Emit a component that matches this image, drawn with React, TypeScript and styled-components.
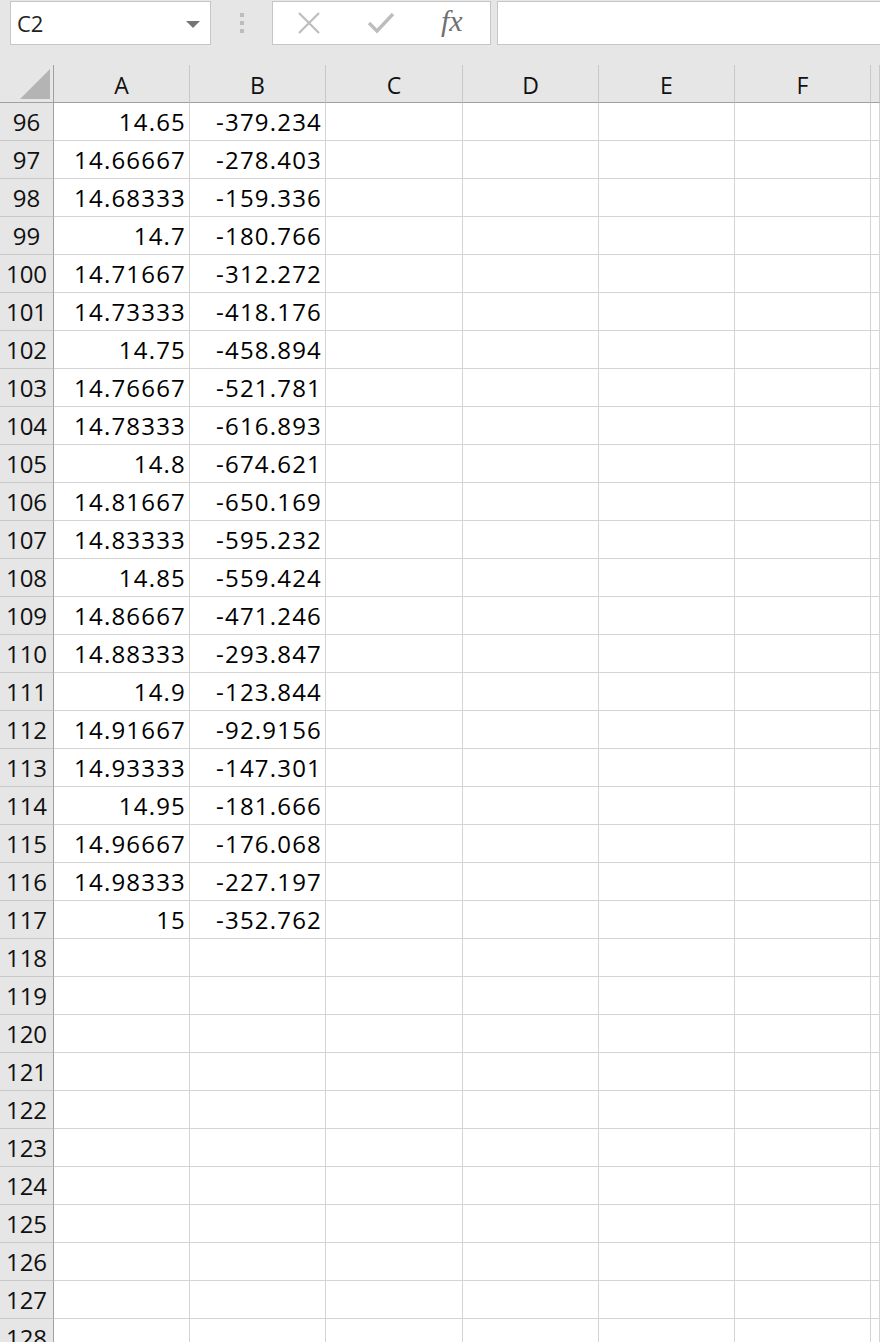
import React from 'react';
import styled, { createGlobalStyle } from 'styled-components';

const GlobalStyle = createGlobalStyle`
    html, body {
        margin: 0;
        padding: 0;
        background: #ffffff;
    }
    body {
        font-family: 'Open Sans', 'Noto Sans', sans-serif;
        overflow: hidden;
    }
`;

const Sheet = styled.div`
    width: 880px;
    height: 1342px;
    overflow: hidden;
    background: #ffffff;
`;

const Toolbar = styled.div`
    height: 65px;
    box-sizing: border-box;
    padding-top: 1px;
    background: #e6e6e6;
    display: flex;
    align-items: flex-start;
`;

const NameBox = styled.div`
    margin-left: 10px;
    width: 201px;
    height: 44px;
    box-sizing: border-box;
    background: #ffffff;
    border: 1px solid #c6c6c6;
    display: flex;
    align-items: center;
    justify-content: space-between;
    padding: 0 10px 0 6px;
    font-size: 22px;
    color: #222222;
`;

const Caret = styled.span`
    width: 0;
    height: 0;
    border-left: 7px solid transparent;
    border-right: 7px solid transparent;
    border-top: 7px solid #767676;
    margin-top: 2px;
`;

const Grip = styled.div`
    width: 61px;
    height: 44px;
    display: flex;
    flex-direction: column;
    align-items: center;
    justify-content: center;
    gap: 4px;

    span {
        width: 4px;
        height: 4px;
        background: #bdbdbd;
    }
`;

const FormulaButtons = styled.div`
    width: 219px;
    height: 44px;
    box-sizing: border-box;
    background: #ffffff;
    border: 1px solid #c6c6c6;
    display: flex;
    align-items: center;
    padding-left: 24px;
    gap: 46px;
`;

const Fx = styled.span`
    font-family: 'Liberation Serif', 'DejaVu Serif', serif;
    font-style: italic;
    font-size: 30px;
    color: #707070;
    margin-left: 0px;
    margin-top: -4px;
`;

const FormulaInput = styled.div`
    flex: 1;
    margin-left: 6px;
    margin-right: -4px;
    height: 44px;
    box-sizing: border-box;
    background: #ffffff;
    border: 1px solid #c6c6c6;
`;

const Grid = styled.div`
    display: grid;
    grid-template-columns: 54px 136px 136px 137px 136px 136px 136px 1fr;
    grid-auto-rows: 38px;
`;

const Corner = styled.div`
    background: #e6e6e6;
    border-right: 1px solid #a0a0a0;
    border-bottom: 1px solid #a0a0a0;
    position: relative;

    &::after {
        content: '';
        position: absolute;
        right: 3px;
        bottom: 3px;
        width: 0;
        height: 0;
        border-left: 30px solid transparent;
        border-bottom: 30px solid #b4b4b4;
    }
`;

const ColHead = styled.div`
    background: #e6e6e6;
    border-right: 1px solid #c8c8c8;
    border-bottom: 1px solid #a0a0a0;
    display: flex;
    align-items: center;
    justify-content: center;
    font-size: 23px;
    color: #111111;
    padding-top: 2px;
    box-sizing: border-box;
`;

const RowHead = styled.div`
    background: #e6e6e6;
    border-right: 1px solid #a0a0a0;
    border-bottom: 1px solid #c8c8c8;
    display: flex;
    align-items: center;
    justify-content: center;
    font-size: 24px;
    color: #111111;
    padding-top: 0;
    box-sizing: border-box;
`;

const Cell = styled.div<{ $right?: boolean }>`
    border-right: 1px solid #d4d4d4;
    border-bottom: 1px solid #d4d4d4;
    display: flex;
    align-items: center;
    justify-content: ${p => (p.$right ? 'flex-end' : 'flex-start')};
    padding: 0 3px 0 4px;
    box-sizing: border-box;
    font-size: 24px;
    letter-spacing: 1.2px;
    color: #000000;
    white-space: nowrap;
`;

const data: [string, string][] = [
    ['14.65', '-379.234'],
    ['14.66667', '-278.403'],
    ['14.68333', '-159.336'],
    ['14.7', '-180.766'],
    ['14.71667', '-312.272'],
    ['14.73333', '-418.176'],
    ['14.75', '-458.894'],
    ['14.76667', '-521.781'],
    ['14.78333', '-616.893'],
    ['14.8', '-674.621'],
    ['14.81667', '-650.169'],
    ['14.83333', '-595.232'],
    ['14.85', '-559.424'],
    ['14.86667', '-471.246'],
    ['14.88333', '-293.847'],
    ['14.9', '-123.844'],
    ['14.91667', '-92.9156'],
    ['14.93333', '-147.301'],
    ['14.95', '-181.666'],
    ['14.96667', '-176.068'],
    ['14.98333', '-227.197'],
    ['15', '-352.762'],
];

const columns = ['A', 'B', 'C', 'D', 'E', 'F', ''];
const firstRow = 96;
const rowCount = 33;

const CrossIcon = () => (
    <svg width="24" height="24" viewBox="0 0 24 24">
        <path d="M2 2 L22 22 M22 2 L2 22" stroke="#bdbdbd" strokeWidth="2.2" fill="none" />
    </svg>
);

const CheckIcon = () => (
    <svg width="28" height="24" viewBox="0 0 28 24">
        <path d="M2 12 L10 20 L26 3" stroke="#bdbdbd" strokeWidth="3.4" fill="none" />
    </svg>
);

export default function App() {
    return (
        <Sheet>
            <GlobalStyle />
            <Toolbar>
                <NameBox>
                    <span>C2</span>
                    <Caret />
                </NameBox>
                <Grip>
                    <span />
                    <span />
                    <span />
                </Grip>
                <FormulaButtons>
                    <CrossIcon />
                    <CheckIcon />
                    <Fx>fx</Fx>
                </FormulaButtons>
                <FormulaInput />
            </Toolbar>
            <Grid>
                <Corner />
                {columns.map((c, i) => (
                    <ColHead key={`h${i}`}>{c}</ColHead>
                ))}
                {Array.from({ length: rowCount }, (_, r) => {
                    const row = data[r];
                    return (
                        <React.Fragment key={r}>
                            <RowHead>{firstRow + r}</RowHead>
                            <Cell $right>{row ? row[0] : ''}</Cell>
                            <Cell $right>{row ? row[1] : ''}</Cell>
                            {columns.slice(2).map((c, i) => (
                                <Cell key={`${r}-${i}`} />
                            ))}
                        </React.Fragment>
                    );
                })}
            </Grid>
        </Sheet>
    );
}
